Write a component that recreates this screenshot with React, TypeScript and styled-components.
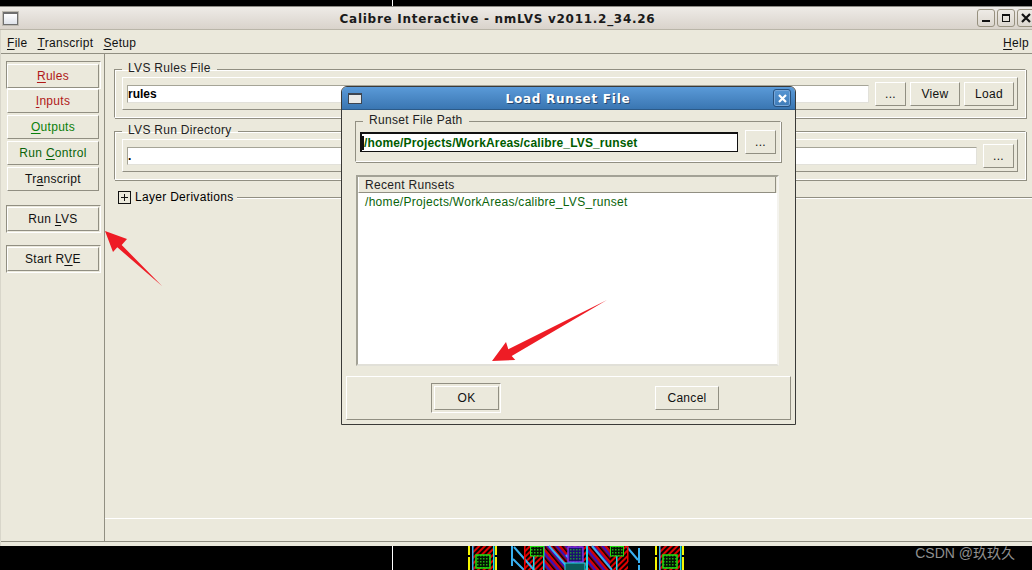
import styled, { createGlobalStyle } from 'styled-components';

const Global = createGlobalStyle`
  html, body { margin: 0; padding: 0; background: #000; }
  body { width: 1032px; height: 570px; overflow: hidden; font-family: "Liberation Sans", Arial, sans-serif; font-size: 12px; letter-spacing: 0.3px; color: #000; }
  u { text-underline-offset: 2px; }
`;

const BG = '#ebe9dc';
const DARK = '#918f82';

const Screen = styled.div`
  position: relative;
  width: 1032px;
  height: 570px;
  display: flex;
  flex-direction: column;
  background: #000;
  overflow: hidden;
`;

const TopGap = styled.div`
  height: 6px;
  flex: none;
`;

const TitleBar = styled.div`
  height: 24px;
  flex: none;
  box-sizing: border-box;
  display: flex;
  align-items: center;
  padding: 0 0 0 3px;
  background: linear-gradient(#eeebe7, #d9d3cb);
  border-top: 1px solid #8c8a84;
  border-bottom: 1px solid #b9b5a8;
`;

const TitleText = styled.div`
  flex: 1;
  text-align: center;
  font-family: "DejaVu Sans", sans-serif;
  font-weight: bold;
  font-size: 12px;
  letter-spacing: 0.72px;
  padding-top: 2px;
  color: #1a1a1a;
`;

const WinIcon = styled.div`
  width: 13px;
  height: 10px;
  background: linear-gradient(#fff, #dfe3ea);
  border: 1px solid #6f6f6f;
  border-top-width: 2px;
  box-shadow: 0 0 0 1px #bdbab0;
`;

const WinButtons = styled.div`
  display: flex;
  gap: 2px;
  margin-right: -3px;
`;

const WinButton = styled.div`
  width: 18px;
  height: 18px;
  box-sizing: border-box;
  border: 1px solid #97917f;
  border-radius: 3px;
  background: linear-gradient(#eeebe6, #dcd7cf);
  display: flex;
  align-items: center;
  justify-content: center;
`;

const Body = styled.div`
  flex: none;
  height: 516px;
  display: flex;
  flex-direction: column;
  background: ${BG};
  border-left: 1px solid #d8d6ca;
  box-sizing: border-box;
`;

const MenuBar = styled.div`
  height: 24px;
  flex: none;
  box-sizing: border-box;
  display: flex;
  align-items: center;
  gap: 10px;
  padding: 2px 3px 0 6px;
  border-bottom: 1px solid ${DARK};
`;

const MenuItem = styled.span<{ $right?: boolean }>`
  margin-left: ${({ $right }) => ($right ? 'auto' : '0')};
  color: #111;
`;

const Columns = styled.div`
  flex: none;
  height: 488px;
  display: flex;
  margin-bottom: 4px;
  border-bottom: 1px solid ${DARK};
  box-sizing: border-box;
`;

const Sidebar = styled.div`
  width: 104px;
  flex: none;
  box-sizing: border-box;
  border-right: 1px solid ${DARK};
  padding: 7px 0 0 5px;
  display: flex;
  flex-direction: column;
`;

const Frame = styled.div<{ $gap?: number; $selected?: boolean }>`
  width: 95px;
  box-sizing: border-box;
  margin-top: ${({ $gap }) => $gap ?? 0}px;
  padding: ${({ $selected }) => ($selected ? '2px 0 0' : '1px 0')};
  border: 1px solid;
  border-color: ${DARK} #fff #fff ${DARK};
  display: flex;
`;

const SideButton = styled.div<{ $color?: string; $top?: number; $inFrame?: boolean }>`
  width: 92px;
  height: 24px;
  margin-top: ${({ $top }) => $top ?? 0}px;
  margin-left: ${({ $inFrame }) => ($inFrame ? 0 : 1)}px;
  box-sizing: border-box;
  display: flex;
  align-items: center;
  justify-content: center;
  color: ${({ $color }) => $color ?? '#111'};
  border: 1px solid;
  border-color: #fff ${DARK} ${DARK} #fff;
`;

const Content = styled.div`
  flex: 1;
  display: flex;
  flex-direction: column;
  min-width: 0;
`;

const Main = styled.div`
  flex: 1;
  padding: 7px 6px 0 9px;
  display: flex;
  flex-direction: column;
`;

const Group = styled.fieldset<{ $top?: number }>`
  margin: ${({ $top }) => $top ?? 0}px 0 0;
  padding: 0 7px 7px 7px;
  min-width: 0;
  border: 1px solid;
  border-color: ${DARK} #fff #fff ${DARK};
  box-shadow: inset 1px 1px 0 #fff, 1px 1px 0 ${DARK};
`;

const Legend = styled.legend`
  margin-left: 0;
  padding: 0 6px;
  height: 16px;
  line-height: 14px;
  color: #222;
`;

const PathLegend = styled(Legend)`
  margin-left: 3px;
`;

const InnerRow = styled.div`
  height: 33px;
  box-sizing: border-box;
  display: flex;
  align-items: center;
  gap: 4px;
  padding: 0 3px 0 4px;
  border: 1px solid;
  border-color: #fff ${DARK} ${DARK} #fff;
`;

const TextField = styled.div`
  flex: 1;
  height: 18px;
  margin-right: 2px;
  box-sizing: border-box;
  background: #fff;
  border-top: 1px solid #a5a497;
  border-left: 1px solid #a5a497;
  border-bottom: 1px solid #e2e1da;
  border-right: 1px solid #e2e1da;
  display: flex;
  align-items: center;
  font-weight: bold;
  letter-spacing: 0;
`;

const Btn = styled.div<{ $w: number; $h?: number }>`
  width: ${({ $w }) => $w}px;
  height: ${({ $h }) => $h ?? 24}px;
  flex: none;
  box-sizing: border-box;
  display: flex;
  align-items: center;
  justify-content: center;
  border: 1px solid;
  border-color: #fff ${DARK} ${DARK} #fff;
  color: #111;
`;

const Derivations = styled.div`
  display: flex;
  align-items: center;
  margin: 9px -6px 0 4px;
  height: 16px;
  gap: 4px;
`;

const Plus = styled.svg`
  flex: none;
`;

const DerivLine = styled.div`
  flex: 1;
  height: 1px;
  background: ${DARK};
  box-shadow: 0 1px 0 #fff;
`;

const StatusBar = styled.div`
  flex: none;
  height: 23px;
  box-sizing: border-box;
  border-top: 1px solid #fff;
`;

const Strip = styled.div`
  flex: 1;
  position: relative;
`;

const Watermark = styled.div`
  position: absolute;
  right: 17px;
  bottom: 9px;
  font-family: "Liberation Sans", "Noto Sans CJK SC", sans-serif;
  font-size: 14px;
  line-height: 16px;
  letter-spacing: 0;
  color: #8f8f8f;
`;

const Dialog = styled.div`
  position: absolute;
  left: 341px;
  top: 86px;
  width: 455px;
  height: 339px;
  box-sizing: border-box;
  display: flex;
  flex-direction: column;
  background: ${BG};
  border: 1px solid #3a3a38;
  border-top-left-radius: 6px;
  border-top-right-radius: 6px;
`;

const DialogTitle = styled.div`
  height: 23px;
  flex: none;
  box-sizing: border-box;
  display: flex;
  align-items: center;
  padding: 0 4px 0 6px;
  border-top-left-radius: 5px;
  border-top-right-radius: 5px;
  background: linear-gradient(#5a9ad8, #3a76b2);
  border-bottom: 1px solid #2c5a88;
`;

const DialogIcon = styled.div`
  width: 12px;
  height: 8px;
  background: #e9e9e6;
  border: 1px solid #3d4550;
  border-top-width: 2px;
`;

const DialogTitleText = styled.div`
  flex: 1;
  text-align: center;
  color: #fff;
  font-family: "DejaVu Sans", sans-serif;
  font-weight: bold;
  font-size: 12px;
  letter-spacing: 0.75px;
  padding: 2px 0 0 1px;
  text-shadow: 1px 1px 0 #26486d;
`;

const CloseBtn = styled.div`
  width: 18px;
  height: 18px;
  box-sizing: border-box;
  border: 1px solid #27507c;
  border-radius: 3px;
  box-shadow: inset 0 0 0 1px #77a6d8;
  display: flex;
  align-items: center;
  justify-content: center;
`;

const DialogBody = styled.div`
  flex: 1;
  display: flex;
  flex-direction: column;
  padding: 3px 4px 4px 4px;
  min-height: 0;
`;

const PathGroup = styled.fieldset`
  margin: 0 10px 0 9px;
  padding: 1px 4px 7px 4px;
  min-width: 0;
  border: 1px solid;
  border-color: ${DARK} #fff #fff ${DARK};
  box-shadow: 1px 1px 0 ${DARK};
`;

const PathRow = styled.div`
  display: flex;
  align-items: center;
  gap: 7px;
`;

const PathInput = styled.div`
  width: 378px;
  height: 20px;
  box-sizing: border-box;
  background: #fff;
  border: 2px solid #111;
  border-right-width: 1px;
  border-bottom-width: 1px;
  padding-top: 1px;
  display: flex;
  align-items: center;
  font-weight: bold;
  letter-spacing: 0.15px;
  color: #005c00;
`;

const Caret = styled.span`
  width: 2px;
  height: 14px;
  background: #111;
  flex: none;
`;

const RecentList = styled.div`
  margin: 13px 12px 0 10px;
  height: 191px;
  flex: none;
  display: flex;
  flex-direction: column;
  box-sizing: border-box;
  border-top: 2px solid #a3a296;
  border-left: 2px solid #a3a296;
  border-bottom: 2px solid #e1e0d8;
  border-right: 2px solid #f4f3ee;
`;

const ListHeader = styled.div`
  height: 16px;
  flex: none;
  box-sizing: border-box;
  padding-left: 6px;
  line-height: 16px;
  color: #222;
  border-bottom: 1px solid ${DARK};
  border-left: 1px solid #fff;
  border-right: 1px solid ${DARK};
  margin-right: 1px;
`;

const ListBody = styled.div`
  flex: 1;
  background: #fff;
  padding: 2px 0 0 7px;
  color: #0a640a;
  line-height: 14px;
`;

const Footer = styled.div`
  margin-top: 10px;
  height: 44px;
  flex: none;
  box-sizing: border-box;
  border: 1px solid;
  border-color: #fff ${DARK} ${DARK} #fff;
  display: flex;
  align-items: center;
  padding: 0 71px 0 84px;
  justify-content: space-between;
`;

const DefaultFrame = styled.div`
  width: 70px;
  height: 30px;
  box-sizing: border-box;
  border: 1px solid;
  border-color: ${DARK} #fff #fff ${DARK};
  padding: 2px 1px 1px 2px;
  display: flex;
`;

const Overlay = styled.svg`
  position: absolute;
  left: 0;
  top: 0;
  pointer-events: none;
`;

const Plain = styled.span`
  white-space: pre;
`;

const CYAN = '#1fd8e8';
const SKY = '#38b0f0';
const GREEN = '#22e010';
const YELLOW = '#f5f500';

// one standard cell, x is the left yellow rail
const Cell = ({ x }: { x: number }) => (
  <g>
    <rect x={x} y={546} width={2} height={9} fill={YELLOW} />
    <rect x={x} y={557} width={2} height={13} fill={YELLOW} />
    <rect x={x + 27} y={546} width={2} height={9} fill={YELLOW} />
    <rect x={x + 27} y={557} width={2} height={13} fill={YELLOW} />
    <rect x={x + 5} y={546} width={20} height={24} fill="url(#redHatch)" />
    <rect x={x + 4} y={546} width={1.5} height={24} fill={SKY} />
    <rect x={x + 25} y={546} width={1.5} height={24} fill={CYAN} />
    <rect x={x + 8} y={555} width={14} height={13} fill="url(#mosaic)" stroke={GREEN} strokeWidth={1.5} />
  </g>
);

// layout picture showing in the strip under the window
const ChipArt = () => (
  <Overlay width={1032} height={570} viewBox="0 0 1032 570">
    <defs>
      <pattern id="redHatch" width="4" height="4" patternUnits="userSpaceOnUse" patternTransform="rotate(45)">
        <rect width="4" height="4" fill="#0a0000" />
        <rect width="2" height="4" fill="#e00000" />
      </pattern>
      <pattern id="blueHatch" width="7" height="7" patternUnits="userSpaceOnUse" patternTransform="rotate(-40)">
        <rect width="7" height="7" fill="#d80000" />
        <rect x="2" width="1.5" height="7" fill="#000" />
        <rect x="4.5" width="2" height="7" fill="#1418e0" />
      </pattern>
      <pattern id="mosaic" width="3" height="3" patternUnits="userSpaceOnUse">
        <rect width="3" height="3" fill="#041404" />
        <rect width="1.5" height="1.5" fill="#22b010" />
      </pattern>
      <pattern id="violet" width="3" height="3" patternUnits="userSpaceOnUse">
        <rect width="3" height="3" fill="#1c1070" />
        <rect width="1.5" height="1.5" fill="#1f9030" />
      </pattern>
    </defs>
    <line x1={392.5} y1={0} x2={392.5} y2={6} stroke="#fff" />
    <line x1={392.5} y1={546} x2={392.5} y2={570} stroke="#fff" />
    <Cell x={468} />
    <Cell x={655} />
    <rect x={524} y={546} width={104} height={24} fill="url(#redHatch)" />
    <rect x={543} y={546} width={24} height={24} fill="url(#blueHatch)" />
    <rect x={588} y={546} width={22} height={24} fill="url(#blueHatch)" />
    <rect x={511} y={546} width={13} height={24} fill="#000" />
    <rect x={628} y={546} width={10} height={24} fill="#000" />
    <rect x={511} y={546} width={2} height={20} fill={SKY} />
    <rect x={638} y={548} width={2} height={15} fill={SKY} />
    <rect x={638} y={565} width={2} height={5} fill={SKY} />
    <path d="M514 547 L534 570 M513 559 L524 570 M549 546 L570 570 M566 555 L580 570 M592 546 L612 570 M627 547 L638 560" stroke={SKY} strokeWidth={2} fill="none" />
    <rect x={524} y={546} width={1.5} height={24} fill="#f00000" />
    <rect x={543} y={546} width={1.5} height={24} fill={CYAN} />
    <rect x={533} y={546} width={1.5} height={24} fill={CYAN} />
    <rect x={586} y={546} width={2} height={24} fill={CYAN} />
    <rect x={616} y={546} width={1.5} height={24} fill={CYAN} />
    <rect x={627} y={546} width={1.5} height={16} fill="#f00000" />
    <rect x={530.5} y={546.5} width={13} height={9.5} fill="url(#mosaic)" stroke={GREEN} />
    <rect x={610.5} y={546.5} width={13} height={9.5} fill="url(#mosaic)" stroke={GREEN} />
    <rect x={568} y={547} width={15} height={15} fill="url(#violet)" stroke="#7a2cf0" strokeWidth={1.5} />
    <rect x={565} y={563} width={20} height={8} fill="#0a5a5a" stroke={CYAN} />
  </Overlay>
);

const RedArrows = () => (
  <Overlay width={1032} height={570} viewBox="0 0 1032 570">
    <path d="M105 231 L127 239 L121.7 245 L162 286 L117.3 247.3 L113 252 Z" fill="#ee1c25" />
    <path d="M492 361 L506 342 L508.3 349.3 L607 300 L511.7 356 L515.3 360 Z" fill="#ee1c25" />
  </Overlay>
);

export default function App() {
  return (
    <Screen>
      <Global />
      <TopGap />
      <TitleBar>
        <WinIcon />
        <TitleText>Calibre Interactive - nmLVS v2011.2_34.26</TitleText>
        <WinButtons>
          <WinButton>
            <svg width="10" height="10" viewBox="0 0 10 10"><rect x="1" y="7" width="8" height="2" fill="#111" /></svg>
          </WinButton>
          <WinButton>
            <svg width="10" height="10" viewBox="0 0 10 10"><rect x="1.5" y="1.5" width="7" height="7" fill="none" stroke="#111" /><rect x="1" y="1" width="8" height="2" fill="#111" /></svg>
          </WinButton>
          <WinButton>
            <svg width="10" height="10" viewBox="0 0 10 10"><path d="M1 1 L9 9 M9 1 L1 9" stroke="#111" strokeWidth="2.2" /></svg>
          </WinButton>
        </WinButtons>
      </TitleBar>
      <Body>
        <MenuBar>
          <MenuItem><u>F</u>ile</MenuItem>
          <MenuItem><u>T</u>ranscript</MenuItem>
          <MenuItem><u>S</u>etup</MenuItem>
          <MenuItem $right><u>H</u>elp</MenuItem>
        </MenuBar>
        <Columns>
          <Sidebar>
            <Frame $selected>
              <SideButton $inFrame $color="#b01818"><Plain><u>R</u>ules</Plain></SideButton>
            </Frame>
            <SideButton $color="#b01818"><Plain><u>I</u>nputs</Plain></SideButton>
            <SideButton $top={2} $color="#0a800a"><Plain><u>O</u>utputs</Plain></SideButton>
            <SideButton $top={2} $color="#0a640a"><Plain>Run <u>C</u>ontrol</Plain></SideButton>
            <SideButton $top={2}><Plain>Tr<u>a</u>nscript</Plain></SideButton>
            <Frame $gap={14}>
              <SideButton $inFrame><Plain>Run <u>L</u>VS</Plain></SideButton>
            </Frame>
            <Frame $gap={12}>
              <SideButton $inFrame><Plain>Start R<u>V</u>E</Plain></SideButton>
            </Frame>
          </Sidebar>
          <Content>
            <Main>
              <Group>
                <Legend>LVS Rules File</Legend>
                <InnerRow>
                  <TextField>rules</TextField>
                  <Btn $w={31}>...</Btn>
                  <Btn $w={50}>View</Btn>
                  <Btn $w={50}>Load</Btn>
                </InnerRow>
              </Group>
              <Group $top={5}>
                <Legend>LVS Run Directory</Legend>
                <InnerRow>
                  <TextField>.</TextField>
                  <Btn $w={31}>...</Btn>
                </InnerRow>
              </Group>
              <Derivations>
                <Plus width="13" height="13" viewBox="0 0 13 13">
                  <rect x="0.5" y="0.5" width="12" height="12" fill="none" stroke="#111" />
                  <path d="M3 6.5 H10 M6.5 3 V10" stroke="#111" />
                </Plus>
                <Plain>Layer Derivations</Plain>
                <DerivLine />
              </Derivations>
            </Main>
            <StatusBar />
          </Content>
        </Columns>
      </Body>
      <Strip>
        <Watermark>CSDN @玖玖久</Watermark>
      </Strip>
      <ChipArt />
      <Dialog>
        <DialogTitle>
          <DialogIcon />
          <DialogTitleText>Load Runset File</DialogTitleText>
          <CloseBtn>
            <svg width="9" height="9" viewBox="0 0 9 9"><path d="M1 1 L8 8 M8 1 L1 8" stroke="#fff" strokeWidth="2.2" /></svg>
          </CloseBtn>
        </DialogTitle>
        <DialogBody>
          <PathGroup>
            <PathLegend>Runset File Path</PathLegend>
            <PathRow>
              <PathInput><Caret />/home/Projects/WorkAreas/calibre_LVS_runset</PathInput>
              <Btn $w={31}>...</Btn>
            </PathRow>
          </PathGroup>
          <RecentList>
            <ListHeader>Recent Runsets</ListHeader>
            <ListBody>/home/Projects/WorkAreas/calibre_LVS_runset</ListBody>
          </RecentList>
          <Footer>
            <DefaultFrame>
              <Btn $w={65}>OK</Btn>
            </DefaultFrame>
            <Btn $w={64}>Cancel</Btn>
          </Footer>
        </DialogBody>
      </Dialog>
      <RedArrows />
    </Screen>
  );
}
